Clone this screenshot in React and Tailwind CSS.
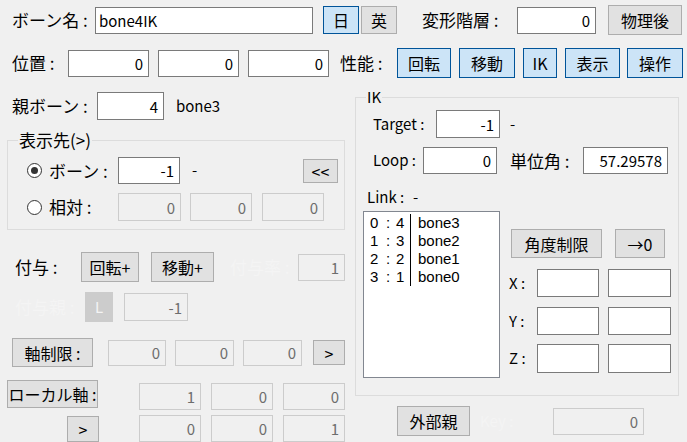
import React from 'react';

function Field({ className = '', off, left, children }) {
  return (
    <div
      className={`${className} flex items-center border text-[15px] leading-none ${
        left ? 'justify-start pl-[3px]' : 'justify-end pr-[5px]'
      } ${off ? 'bg-[#f0f0f0] border-[#cccccc] text-[#6d6d6d]' : 'bg-white border-[#7a7a7a] text-black'}`}
    >
      {children}
    </div>
  );
}

function Btn({ className = '', on, children }) {
  return (
    <div
      className={`${className} flex items-center justify-center border text-[16px] leading-none ${
        on ? 'bg-[#cce4f7] border-[#005499]' : 'bg-[#e1e1e1] border-[#adadad]'
      }`}
    >
      {children}
    </div>
  );
}

function Radio({ on }) {
  return (
    <div className="w-[15px] h-[15px] rounded-full border border-[#333333] bg-white flex items-center justify-center">
      {on && <div className="w-[7px] h-[7px] rounded-full bg-[#333333]" />}
    </div>
  );
}

const links = [
  ['0', '4', 'bone3'],
  ['1', '3', 'bone2'],
  ['2', '2', 'bone1'],
  ['3', '1', 'bone0'],
];

export default function App() {
  return (
    <div className="w-[687px] h-[442px] overflow-hidden bg-[#f0f0f0] text-black font-['Noto_Sans_CJK_JP',sans-serif] text-[17px] select-none">
      {/* name row */}
      <div className="flex items-center h-[30px] mt-[5px]">
        <span className="ml-[12px] w-[83px]">ボーン名 :</span>
        <Field left className="w-[218px] h-[27px]">bone4IK</Field>
        <Btn on className="ml-[10px] w-[36px] h-[28px]">日</Btn>
        <Btn className="ml-[2px] w-[36px] h-[28px] text-[14px]">英</Btn>
        <span className="ml-[25px] w-[95px]">変形階層 :</span>
        <Field className="w-[79px] h-[27px]">0</Field>
        <Btn className="ml-[12px] w-[74px] h-[30px]">物理後</Btn>
      </div>

      {/* position + flags */}
      <div className="flex items-center h-[30px] mt-[13px]">
        <span className="ml-[12px] w-[56px]">位置 :</span>
        <Field className="w-[81px] h-[27px]">0</Field>
        <Field className="ml-[9px] w-[81px] h-[27px]">0</Field>
        <Field className="ml-[9px] w-[81px] h-[27px]">0</Field>
        <span className="ml-[11px] w-[57px]">性能 :</span>
        <Btn on className="w-[54px] h-[30px]">回転</Btn>
        <Btn on className="ml-[8px] w-[56px] h-[30px]">移動</Btn>
        <Btn on className="ml-[8px] w-[34px] h-[30px] text-[15px]">IK</Btn>
        <Btn on className="ml-[8px] w-[55px] h-[30px]">表示</Btn>
        <Btn on className="ml-[7px] w-[56px] h-[30px]">操作</Btn>
      </div>

      <div className="flex">
        {/* left column */}
        <div className="w-[345px] flex flex-col">
          <div className="flex items-center h-[28px] mt-[14px]">
            <span className="ml-[12px] w-[85px]">親ボーン :</span>
            <Field className="w-[67px] h-[28px]">4</Field>
            <span className="ml-[12px] text-[15px]">bone3</span>
          </div>

          <fieldset className="mt-[10px] ml-[7px] w-[338px] border border-[#dcdcdc]">
            <legend className="ml-[10px] px-[1px] leading-[20px]">表示先(&gt;)</legend>
            <div className="flex flex-col gap-[9px] pt-[7px] pb-[8px]">
              <div className="flex items-center h-[27px] pl-[19px]">
                <Radio on />
                <span className="ml-[7px] w-[69px]">ボーン :</span>
                <Field className="w-[62px] h-[27px]">-1</Field>
                <span className="ml-[12px] text-[15px]">-</span>
                <Btn className="ml-auto mr-[6px] w-[35px] h-[24px] text-[15px]">&lt;&lt;</Btn>
              </div>
              <div className="flex items-center h-[28px] pl-[19px]">
                <Radio />
                <span className="ml-[7px] w-[69px]">相対 :</span>
                <Field off className="w-[63px] h-[28px]">0</Field>
                <Field off className="ml-[9px] w-[62px] h-[28px]">0</Field>
                <Field off className="ml-[10px] w-[62px] h-[28px]">0</Field>
              </div>
            </div>
          </fieldset>

          <div className="flex items-center h-[30px] mt-[22px]">
            <span className="ml-[15px] w-[66px]">付与 :</span>
            <Btn className="w-[58px] h-[30px]">回転+</Btn>
            <Btn className="ml-[12px] w-[63px] h-[30px]">移動+</Btn>
            <span className="ml-[16px] text-[#f4f4f4]">付与率 :</span>
            <Field off className="ml-auto w-[47px] h-[27px]">1</Field>
          </div>

          <div className="flex items-center h-[30px] mt-[10px]">
            <span className="ml-[15px] w-[70px] text-[#f4f4f4]">付与親 :</span>
            <div className="w-[28px] h-[30px] bg-[#cccccc] text-[#f4f4f4] text-[15px] flex items-center justify-center">L</div>
            <Field off className="ml-[11px] w-[64px] h-[28px]">-1</Field>
          </div>

          <div className="flex items-center h-[29px] mt-[16px]">
            <Btn className="ml-[12px] w-[81px] h-[29px]">軸制限 :</Btn>
            <Field off className="ml-[15px] w-[58px] h-[26px]">0</Field>
            <Field off className="ml-[9px] w-[59px] h-[26px]">0</Field>
            <Field off className="ml-[9px] w-[59px] h-[26px]">0</Field>
            <Btn className="ml-[11px] w-[32px] h-[25px] text-[15px]">&gt;</Btn>
          </div>

          <div className="flex items-start mt-[13px]">
            <Btn className="ml-[7px] w-[91px] h-[28px]">ローカル軸 :</Btn>
            <Field off className="mt-[3px] ml-[41px] w-[62px] h-[27px]">1</Field>
            <Field off className="mt-[3px] ml-[10px] w-[62px] h-[27px]">0</Field>
            <Field off className="mt-[3px] ml-[10px] w-[62px] h-[27px]">0</Field>
          </div>
          <div className="flex items-start mt-[5px]">
            <Btn className="mt-[1px] ml-[67px] w-[32px] h-[26px] text-[15px]">&gt;</Btn>
            <Field off className="ml-[40px] w-[62px] h-[27px]">0</Field>
            <Field off className="ml-[10px] w-[62px] h-[27px]">0</Field>
            <Field off className="ml-[10px] w-[62px] h-[27px]">1</Field>
          </div>
        </div>

        {/* right column */}
        <div className="ml-[10px] w-[324px] flex flex-col">
          <fieldset className="mt-[9px] w-[324px] border border-[#dcdcdc] pb-[17px]">
            <legend className="ml-[10px] px-[1px] leading-[20px] text-[15px]">IK</legend>
            <div className="flex items-center h-[28px] mt-[3px] text-[15px]">
              <span className="ml-[17px] w-[63px]">Target :</span>
              <Field className="w-[64px] h-[28px]">-1</Field>
              <span className="ml-[10px]">-</span>
            </div>
            <div className="flex items-center h-[27px] mt-[9px]">
              <span className="ml-[17px] w-[50px] text-[15px]">Loop :</span>
              <Field className="w-[74px] h-[27px]">0</Field>
              <span className="ml-[13px] w-[73px]">単位角 :</span>
              <Field className="w-[85px] h-[27px]">57.29578</Field>
            </div>
            <div className="flex items-center h-[20px] mt-[13px] ml-[11px] text-[15px]">
              <span className="w-[46px]">Link :</span>
              <span>-</span>
            </div>
            <div className="flex mt-[4px]">
              <div className="ml-[7px] w-[137px] h-[167px] border border-[#828790] bg-white pt-[2px] pl-[6px] text-[15px] leading-[18px] font-['Liberation_Sans',sans-serif]">
                {links.map(([a, b, name]) => (
                  <div key={a} className="flex h-[18px]">
                    <div className="w-[40px] flex">
                      <span className="w-[10px]">{a}</span>
                      <span className="w-[16px] text-center">:</span>
                      <span>{b}</span>
                    </div>
                    <span className="border-l border-black pl-[7px]">{name}</span>
                  </div>
                ))}
              </div>
              <div className="ml-[9px] flex flex-col">
                <div className="flex mt-[18px]">
                  <Btn className="ml-[2px] w-[91px] h-[29px]">角度制限</Btn>
                  <Btn className="ml-[13px] w-[50px] h-[29px] text-[15px]">→0</Btn>
                </div>
                <div className="flex items-center h-[28px] mt-[11px]">
                  <span className="w-[28px] text-[15px]">X :</span>
                  <Field className="w-[62px] h-[28px]" />
                  <Field className="ml-[9px] w-[63px] h-[28px]" />
                </div>
                <div className="flex items-center h-[28px] mt-[10px]">
                  <span className="w-[28px] text-[15px]">Y :</span>
                  <Field className="w-[62px] h-[28px]" />
                  <Field className="ml-[9px] w-[63px] h-[28px]" />
                </div>
                <div className="flex items-center h-[29px] mt-[9px]">
                  <span className="w-[28px] text-[15px]">Z :</span>
                  <Field className="w-[62px] h-[29px]" />
                  <Field className="ml-[9px] w-[63px] h-[29px]" />
                </div>
              </div>
            </div>
          </fieldset>

          <div className="flex items-center h-[30px] mt-[10px]">
            <Btn className="ml-[42px] w-[73px] h-[30px]">外部親</Btn>
            <span className="ml-[10px] w-[73px] text-[#f4f4f4] text-[15px]">Key :</span>
            <Field off className="w-[91px] h-[27px]">0</Field>
          </div>
        </div>
      </div>
    </div>
  );
}
